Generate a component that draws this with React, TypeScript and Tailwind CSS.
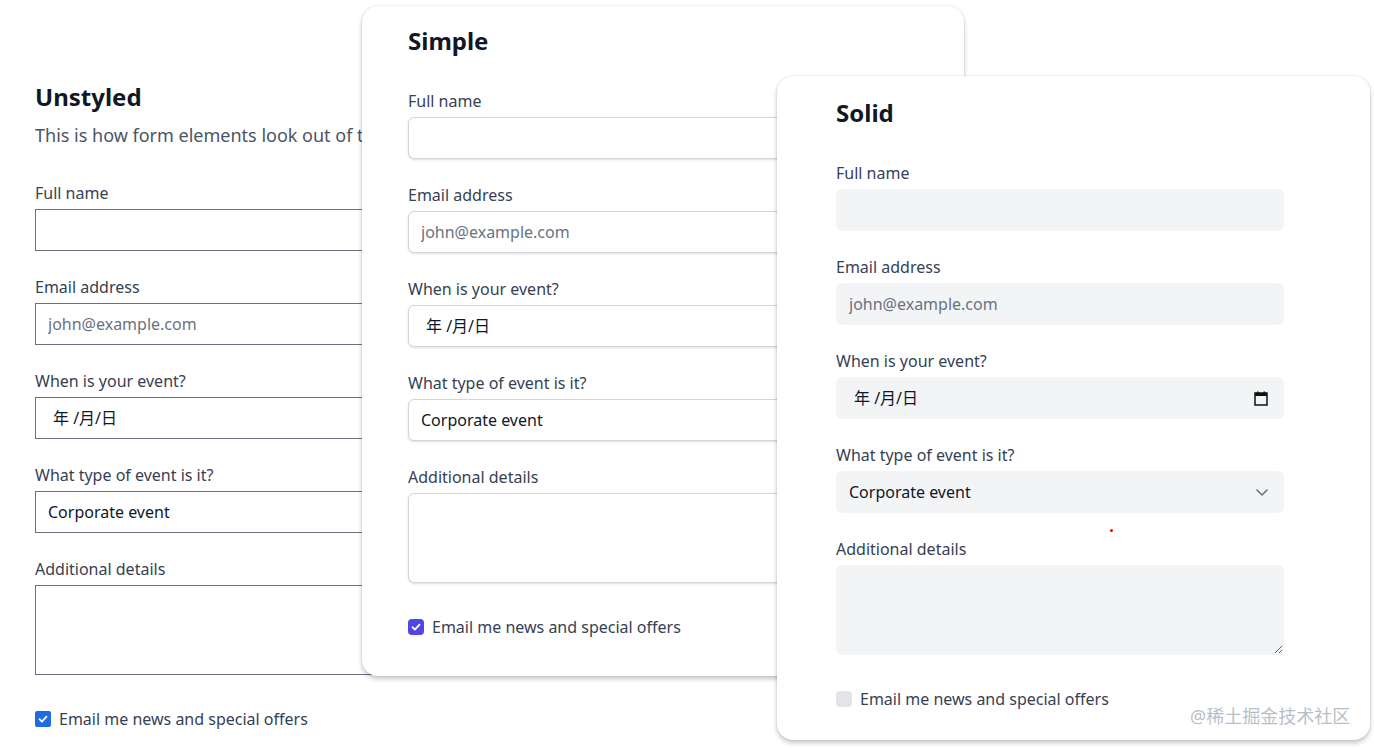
import type { ReactNode } from "react";

type Variant = "unstyled" | "simple" | "solid";

const inputCls: Record<Variant, string> = {
  unstyled:
    "mt-1 block w-full border border-gray-500 bg-white px-3 py-2 text-base leading-6 text-gray-900 outline-none placeholder:text-gray-500",
  simple:
    "mt-1 block w-full rounded-md border border-gray-300 bg-white px-3 py-2 text-base leading-6 text-gray-900 shadow-sm outline-none placeholder:text-gray-500",
  solid:
    "mt-1 block w-full rounded-md border border-transparent bg-gray-100 px-3 py-2 text-base leading-6 text-gray-900 outline-none placeholder:text-gray-500",
};

const dateCls: Record<Variant, string> = {
  unstyled:
    "mt-1 flex w-full items-center justify-between border border-gray-500 bg-white py-2 pl-[17px] pr-4 text-base leading-6 text-gray-900",
  simple:
    "mt-1 flex w-full items-center justify-between rounded-md border border-gray-300 bg-white py-2 pl-[17px] pr-4 text-base leading-6 text-gray-900 shadow-sm",
  solid:
    "mt-1 flex w-full items-center justify-between rounded-md border border-transparent bg-gray-100 py-2 pl-[17px] pr-[15px] text-base leading-6 text-gray-900",
};

const boxCls: Record<Variant, string> = {
  unstyled: "flex h-4 w-4 items-center justify-center rounded-[2px] bg-[#1f6ae6]",
  simple: "flex h-4 w-4 items-center justify-center rounded bg-[#4f46e5]",
  solid: "flex h-4 w-4 items-center justify-center rounded bg-[#e2e4e8]",
};

function Label({ text, children }: { text: string; children: ReactNode }) {
  return (
    <label className="block">
      <span className="block leading-6 text-gray-700">{text}</span>
      {children}
    </label>
  );
}

function Check() {
  return (
    <svg viewBox="0 0 16 16" className="h-4 w-4" fill="none">
      <path d="M4.5 8.2l2.4 2.4 4.6-5" stroke="white" strokeWidth="1.8" strokeLinecap="round" strokeLinejoin="round" />
    </svg>
  );
}

function Form({ v }: { v: Variant }) {
  return (
    <div className="grid w-[448px] grid-cols-1 gap-6">
      <Label text="Full name">
        <input type="text" className={inputCls[v]} />
      </Label>
      <Label text="Email address">
        <input type="email" placeholder="john@example.com" className={inputCls[v]} />
      </Label>
      <Label text="When is your event?">
        <div className={dateCls[v]}>
          <span>年 /月/日</span>
          {v === "solid" && (
            <svg viewBox="0 0 14 15" className="h-[15px] w-[14px]">
              <rect x="1" y="2" width="12" height="12" fill="none" stroke="#111" strokeWidth="1.5" />
              <rect x="1" y="2" width="12" height="3" fill="#111" />
              <rect x="3" y="0.5" width="1.5" height="2.5" fill="#111" />
              <rect x="9.5" y="0.5" width="1.5" height="2.5" fill="#111" />
            </svg>
          )}
        </div>
      </Label>
      <Label text="What type of event is it?">
        <div className="relative">
          <select className={inputCls[v] + " appearance-none"} defaultValue="corporate">
            <option value="corporate">Corporate event</option>
            <option value="wedding">Wedding</option>
            <option value="birthday">Birthday</option>
            <option value="other">Other</option>
          </select>
          {v === "solid" && (
            <svg viewBox="0 0 20 20" className="pointer-events-none absolute right-[12px] top-[11px] h-5 w-5" fill="none">
              <path d="M5 8l5 5 5-5" stroke="#6b7280" strokeWidth="1.6" strokeLinecap="round" strokeLinejoin="round" />
            </svg>
          )}
        </div>
      </Label>
      <Label text="Additional details">
        <textarea rows={3} className={inputCls[v]} />
      </Label>
      <div className="mt-2">
        <label className="inline-flex items-center">
          <span className={boxCls[v]}>{v !== "solid" && <Check />}</span>
          <span className="ml-2 leading-6 text-gray-700">Email me news and special offers</span>
        </label>
      </div>
    </div>
  );
}

export default function App() {
  return (
    <div className="relative h-[748px] w-[1374px] overflow-hidden bg-white font-['Noto_Sans','Noto_Sans_CJK_SC',sans-serif] text-base">
      {/* Unstyled */}
      <div className="pl-[35px] pt-[81px]">
        <h2 className="text-2xl font-bold leading-8 text-gray-900">Unstyled</h2>
        <p className="mt-2 whitespace-nowrap text-lg leading-7 text-gray-600">
          This is how form elements look out of the box.
        </p>
        <div className="mt-8">
          <Form v="unstyled" />
        </div>
      </div>

      {/* Simple card */}
      <div className="absolute left-[362px] top-[6px] h-[670px] w-[602px] rounded-2xl bg-white pl-[46px] pt-[19px] shadow-[0_3px_5px_rgba(0,0,0,0.22),0_0_2px_rgba(0,0,0,0.14)]">
        <h2 className="text-2xl font-bold leading-8 text-gray-900">Simple</h2>
        <div className="mt-8">
          <Form v="simple" />
        </div>
      </div>

      {/* Solid card */}
      <div className="absolute left-[777px] top-[76px] h-[664px] w-[593px] rounded-2xl bg-white pl-[59px] pt-[21px] shadow-[0_3px_5px_rgba(0,0,0,0.22),0_0_2px_rgba(0,0,0,0.14)]">
        <h2 className="text-2xl font-bold leading-8 text-gray-900">Solid</h2>
        <div className="mt-8">
          <Form v="solid" />
        </div>
      </div>

      <span className="absolute left-[1110px] top-[529px] h-[3px] w-[3px] rounded-full bg-red-600" />
      <span className="absolute left-[1190px] top-[704px] text-lg leading-6 text-gray-400/70">@稀土掘金技术社区</span>
    </div>
  );
}
